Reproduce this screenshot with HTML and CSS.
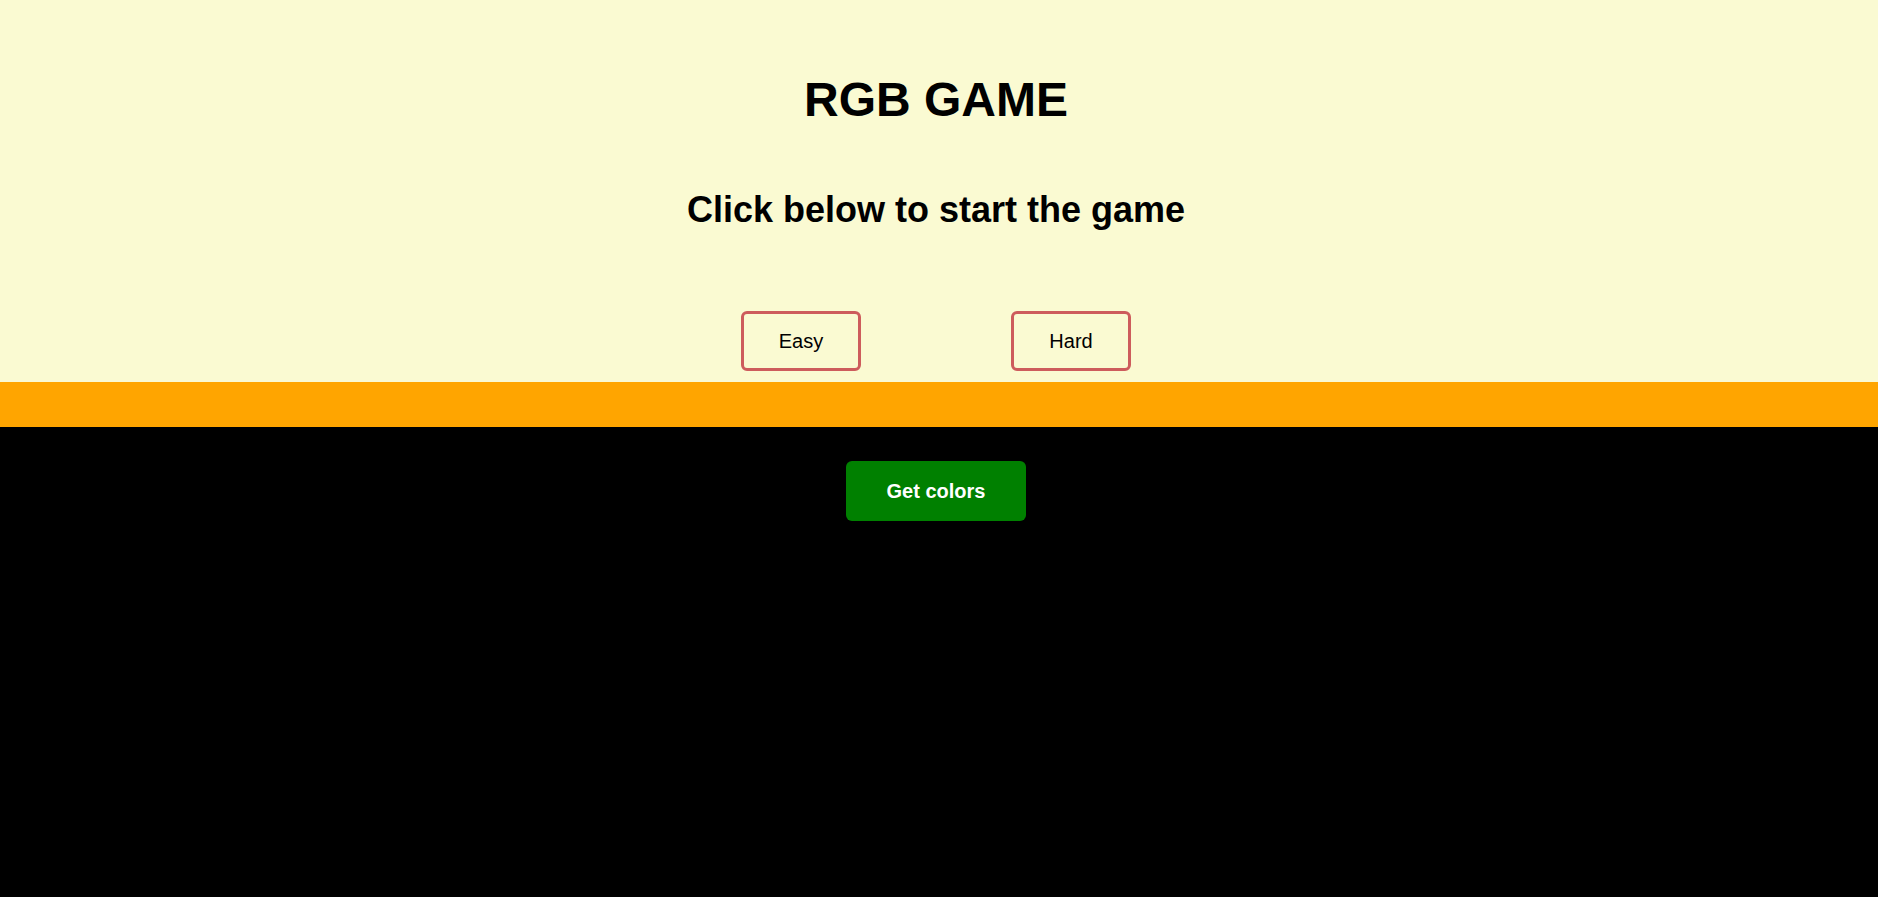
FILE: index.html
```html
<!DOCTYPE html>
<html lang="en">
<head>
<meta charset="utf-8">
<title>RGB GAME</title>
<link rel="stylesheet" href="styles.css">
</head>
<body>
  <header class="intro">
    <h1 class="title">RGB GAME</h1>
    <h2 class="subtitle">Click below to start the game</h2>
    <div class="levels">
      <button class="level-btn" type="button">Easy</button>
      <button class="level-btn" type="button">Hard</button>
    </div>
  </header>
  <div class="band"></div>
  <main class="board">
    <button class="get-btn" type="button">Get colors</button>
  </main>
</body>
</html>
```

FILE: styles.css
```css
* {
  box-sizing: border-box;
}

html, body {
  margin: 0;
  padding: 0;
  height: 100%;
}

body {
  background: #000000;
  font-family: "Liberation Sans", Arial, sans-serif;
}

.intro {
  background: #fafad2;
  padding: 72px 6px 11px 0;
  display: flex;
  flex-direction: column;
  align-items: center;
}

.title {
  margin: 0;
  font-size: 48px;
  line-height: 56px;
  font-weight: bold;
  color: #000;
}

.subtitle {
  margin: 61px 0 0 0;
  font-size: 36px;
  line-height: 42px;
  font-weight: bold;
  color: #000;
}

.levels {
  margin-top: 80px;
  display: flex;
  gap: 150px;
}

.level-btn {
  width: 120px;
  height: 60px;
  border: 3px solid #cd5c5c;
  border-radius: 6px;
  background: transparent;
  font-family: "Liberation Sans", Arial, sans-serif;
  font-size: 20px;
  color: #000;
  padding: 0;
  cursor: pointer;
}

.band {
  height: 45px;
  background: #ffa500;
}

.board {
  display: flex;
  justify-content: center;
  padding: 34px 6px 0 0;
}

.get-btn {
  width: 180px;
  height: 60px;
  border: none;
  border-radius: 6px;
  background: #008000;
  color: #ffffff;
  font-family: "Liberation Sans", Arial, sans-serif;
  font-size: 20px;
  font-weight: bold;
  padding: 0;
  cursor: pointer;
}
```
